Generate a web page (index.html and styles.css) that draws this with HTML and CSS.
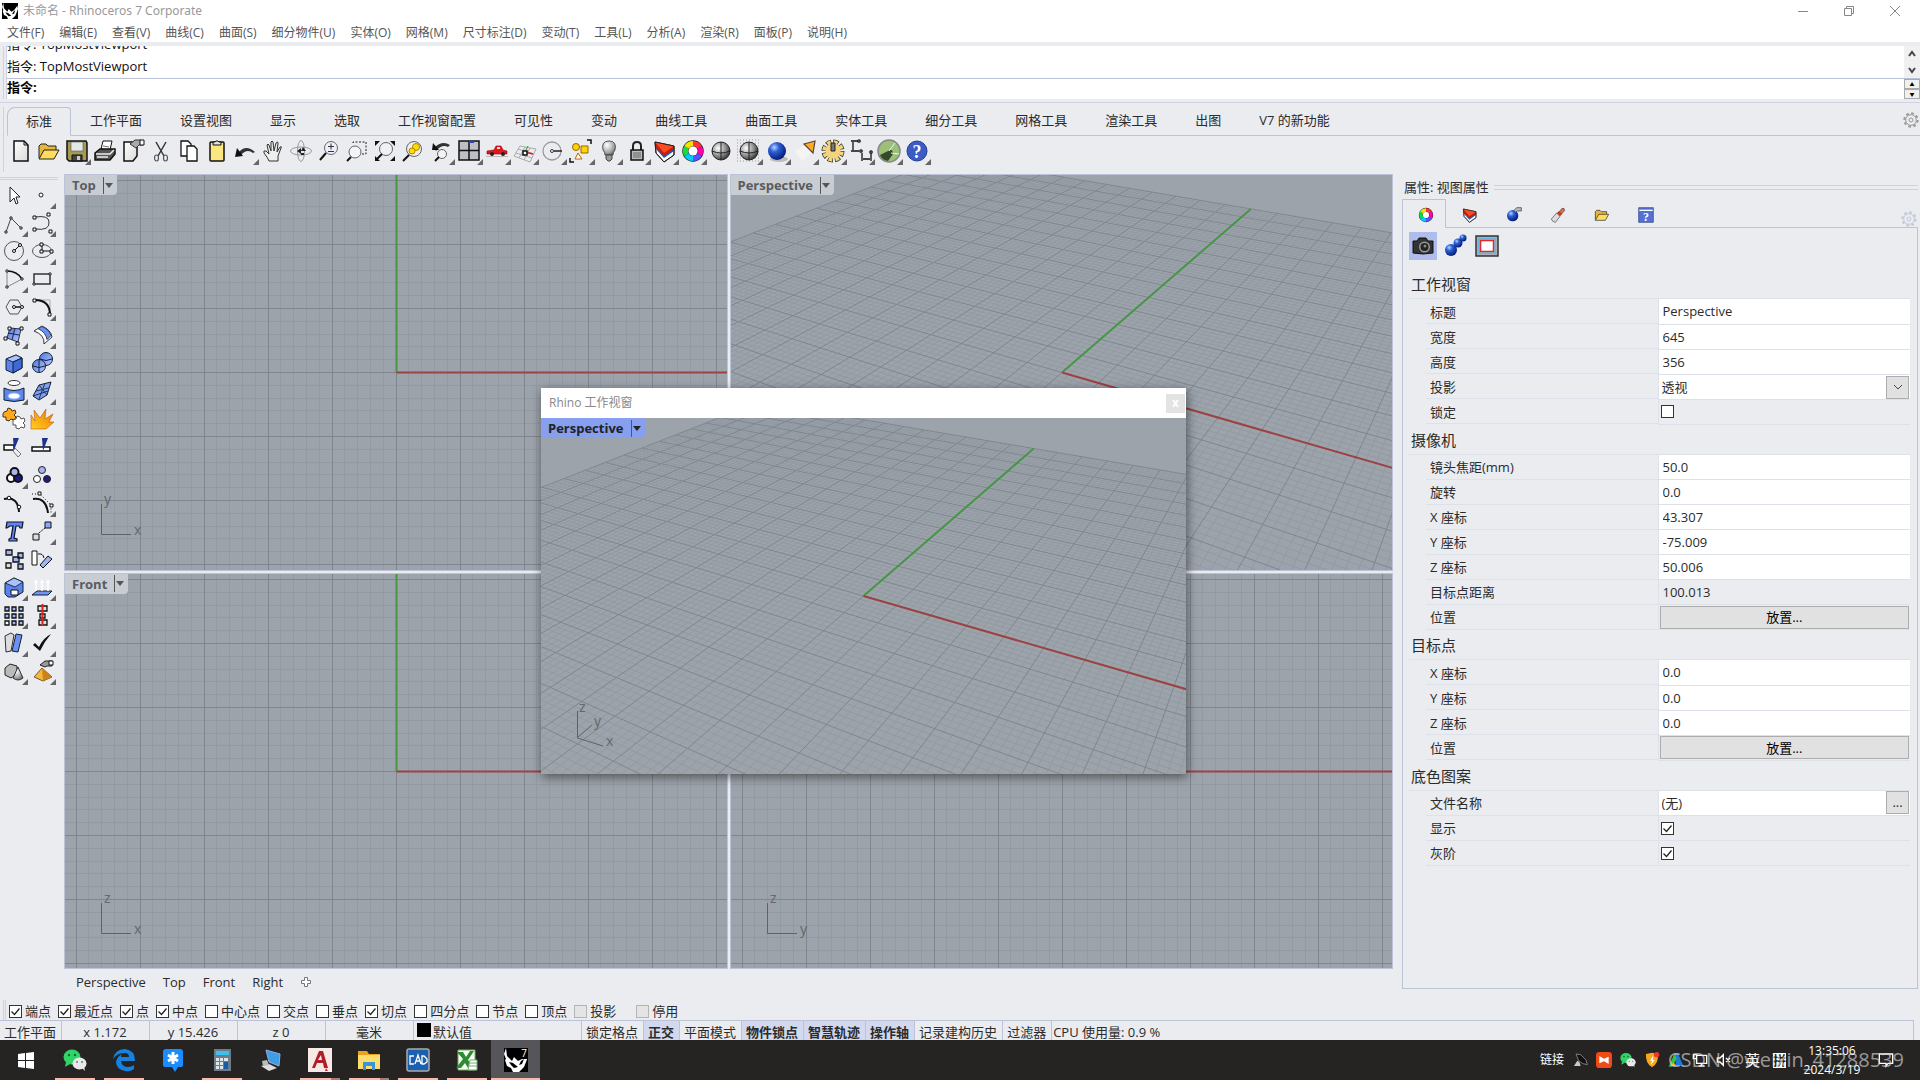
FILE: index.html
```html
<!DOCTYPE html>
<html lang="zh-CN">

<head>
    <meta charset="UTF-8">
    <meta name="viewport" content="width=device-width, initial-scale=1.0">
    <title>未命名 - Rhinoceros 7 Corporate</title>
    <link rel="stylesheet" href="styles.css">
</head>

<body>
    <!-- Shared icon shapes -->
    <svg class="defs" width="0" height="0" aria-hidden="true">
        <defs>
            <radialGradient id="gBlue" cx="35%" cy="30%" r="75%"><stop offset="0" stop-color="#b9d2ff"/><stop offset=".35" stop-color="#2a5fd8"/><stop offset="1" stop-color="#04156b"/></radialGradient>
            <radialGradient id="gGrey" cx="35%" cy="35%" r="75%"><stop offset="0" stop-color="#fff"/><stop offset=".5" stop-color="#999"/><stop offset="1" stop-color="#222"/></radialGradient>
            <radialGradient id="gBulb" cx="35%" cy="30%" r="75%"><stop offset="0" stop-color="#fff"/><stop offset=".7" stop-color="#a5a5a5"/><stop offset="1" stop-color="#666"/></radialGradient>
            <linearGradient id="gSurf" x1="0" y1="0" x2="1" y2="1"><stop offset="0" stop-color="#4a74e8"/><stop offset="1" stop-color="#b8ccff"/></linearGradient>
            <linearGradient id="gOrange" x1="0" y1="1" x2="1" y2="0"><stop offset="0" stop-color="#ffcf20"/><stop offset="1" stop-color="#f07800"/></linearGradient>
            <linearGradient id="gPage" x1="0" y1="0" x2="1" y2="1"><stop offset="0" stop-color="#fff"/><stop offset="1" stop-color="#d8d8d8"/></linearGradient>
        </defs>
        <symbol id="folder" viewBox="0 0 24 24"><path d="M2 19V7l2-2h5l2 2h8v4" fill="#e6b73a" stroke="#222"/><path d="M2 20 7 11h15l-5 9z" fill="#ffdc5e" stroke="#222"/></symbol>
        <symbol id="wheel" viewBox="0 0 24 24"><g fill="none" stroke-width="5"><circle cx="12" cy="12" r="7.500" stroke="#222" stroke-width="6.500"/><path d="M12 4.500A7.500 7.500 0 0 1 18.500 8.300" stroke="#f33"/><path d="M18.500 8.200A7.500 7.500 0 0 1 18.500 15.800" stroke="#f0a"/><path d="M18.500 15.700A7.500 7.500 0 0 1 12 19.500" stroke="#55f"/><path d="M12 19.500A7.500 7.500 0 0 1 5.500 15.700" stroke="#0cf"/><path d="M5.500 15.800A7.500 7.500 0 0 1 5.500 8.200" stroke="#1d4"/><path d="M5.500 8.300A7.500 7.500 0 0 1 12 4.500" stroke="#fd0"/></g><circle cx="12" cy="12" r="4.500" fill="#fff"/></symbol>
        <symbol id="layers" viewBox="0 0 24 24"><path d="M2 3l19 4v9l-10 7-8-9z" fill="#fff" stroke="#222"/><path d="M3 10l8 9 10-7V8l-10 7-8-9z" fill="#2450c0"/><path d="M2 3l1 6 8 8 10-7V7z" fill="#c3200c"/><path d="M2 3l19 4-10 7z" fill="#ff4a20"/><path d="M2 3l19 4v9l-10 7-8-9z" fill="none" stroke="#222"/></symbol>
        <symbol id="ball" viewBox="0 0 24 24"><circle cx="12" cy="12" r="9" fill="url(#gGrey)" stroke="#222"/><path d="M12 3v18M3 12q9 4 18 0" fill="none" stroke="#222"/></symbol>
        <symbol id="cog" viewBox="0 0 24 24"><circle cx="12" cy="12" r="10" fill="none" stroke-width="3" stroke-dasharray="4 3.850"/><circle cx="12" cy="12" r="8" fill="none" stroke-width="1.500"/><circle cx="12" cy="12" r="3" fill="none" stroke-width="1.500"/></symbol>
        <symbol id="rhino" viewBox="0 0 24 24"><path fill="#000" d="M0 0h24v24H0z"/><path fill="#fff" d="M2 0l1 8 5 5 2-4 4 4 4-2 5-7 1 5-4 10-5 5H9l-2-4-4-2-2-6 1-1-2-5z"/><path d="m5 14 4 1 5 4-4 1-3-3zM17 13l3-2-2 5-3 1z"/></symbol>
        <symbol id="wechat" viewBox="0 0 24 24"><ellipse cx="9" cy="9" rx="8.500" ry="7.500" fill="#2fd566"/><path d="m3 14-1 5 5-3z" fill="#2fd566"/><circle cx="6" cy="7" r="1.200" fill="#176b34"/><circle cx="12" cy="7" r="1.200" fill="#176b34"/><ellipse cx="16.500" cy="15.500" rx="7" ry="6" fill="#e9e9e9"/><path d="m19 20 3 3-1-5z" fill="#e9e9e9"/><circle cx="14" cy="14" r="1" fill="#777"/><circle cx="19" cy="14" r="1" fill="#777"/></symbol>
    </svg>

    <header class="titlebar">
        <svg class="app-icon"><use href="#rhino"/></svg>
        <span class="title">未命名 - Rhinoceros 7 Corporate</span>
        <div class="win-btns">
            <button aria-label="最小化"><svg viewBox="0 0 12 12"><path d="M1 6.500h10"/></svg></button>
            <button aria-label="还原"><svg viewBox="0 0 12 12"><path d="M1.500 3.500h7v7h-7zM3.500 3V1.500h7v7H9"/></svg></button>
            <button aria-label="关闭"><svg viewBox="0 0 12 12"><path d="m1 1 10 10M11 1 1 11"/></svg></button>
        </div>
    </header>

    <nav class="menubar">
        <a href="#">文件(F)</a><a href="#">编辑(E)</a><a href="#">查看(V)</a><a href="#">曲线(C)</a><a href="#">曲面(S)</a><a href="#">细分物件(U)</a><a href="#">实体(O)</a><a href="#">网格(M)</a><a href="#">尺寸标注(D)</a><a href="#">变动(T)</a><a href="#">工具(L)</a><a href="#">分析(A)</a><a href="#">渲染(R)</a><a href="#">面板(P)</a><a href="#">说明(H)</a>
    </nav>

    <section class="command">
        <div class="history">
            <div class="history-text">
                <p>指令: TopMostViewport</p>
                <p>指令: TopMostViewport</p>
            </div>
            <div class="scroll">
                <svg viewBox="0 0 10 10"><path d="m2 7 3-4 3 4"/></svg>
                <svg viewBox="0 0 10 10"><path d="m2 3 3 4 3-4"/></svg>
            </div>
        </div>
        <div class="prompt">
            <label for="cmd">指令:</label>
            <input id="cmd" type="text">
            <div class="spin"><button aria-label="上">▲</button><button aria-label="下">▼</button></div>
        </div>
    </section>

    <section class="tools">
        <div class="tabs">
            <button class="tab active">标准</button><button class="tab">工作平面</button><button class="tab">设置视图</button><button class="tab">显示</button><button class="tab">选取</button><button class="tab">工作视窗配置</button><button class="tab">可见性</button><button class="tab">变动</button><button class="tab">曲线工具</button><button class="tab">曲面工具</button><button class="tab">实体工具</button><button class="tab">细分工具</button><button class="tab">网格工具</button><button class="tab">渲染工具</button><button class="tab">出图</button><button class="tab">V7 的新功能</button>
            <svg class="cog"><use href="#cog"/></svg>
        </div>
        <div class="toolbar">
            <button class="tool" aria-label="新建"><svg viewBox="0 0 24 24"><path d="M5 2h10l4 4v16H5z" fill="url(#gPage)" stroke="#111" stroke-width="1.500"/><path d="M15 2v4h4" fill="none" stroke="#111"/></svg></button>
            <button class="tool" aria-label="打开"><svg><use href="#folder"/></svg></button>
            <button class="tool more" aria-label="保存"><svg viewBox="0 0 24 24"><path d="M2 2h19l1 2v18H4l-2-2z" fill="#a49a55" stroke="#111" stroke-width="1.500"/><path fill="#e4e9e4" stroke="#555" stroke-width=".6" d="M6 3h12v9H6z"/><path fill="#444" stroke="#111" d="M7 16h10v6H7z"/><path fill="#ccc" d="M12 17h3v4h-3z"/></svg></button>
            <button class="tool" aria-label="打印"><svg viewBox="0 0 24 24"><path d="m8 10 2-8h9l-2 9z" fill="#fff" stroke="#111"/><path d="m2 14 5-4h15v5l-5 6H2z" fill="#555" stroke="#111" stroke-width="1.500"/><path d="M3 15h14l4-4M4 18h11" fill="none" stroke="#eee" stroke-width="1.500"/><path d="m10 7 6 1" stroke="#777"/></svg></button>
            <button class="tool" aria-label="属性"><svg viewBox="0 0 24 24"><path d="M3 3h13v14l-4 5H3z" fill="url(#gPage)" stroke="#111" stroke-width="1.500"/><path d="m9 5 5-4h5l3 1v4h-4l-3 3z" fill="#aaa" stroke="#333"/><path d="M19 1h4v5h-4z" fill="#fff" stroke="#111"/></svg></button>
            <button class="tool" aria-label="剪切"><svg viewBox="0 0 24 24"><path d="m7 3 8 14M17 3 9 17" stroke="#333" stroke-width="1.500"/><g fill="none" stroke="#556" stroke-width="1.200"><ellipse cx="7.500" cy="19" rx="2" ry="3"/><ellipse cx="16.500" cy="19" rx="2" ry="3"/></g></svg></button>
            <button class="tool" aria-label="复制"><svg viewBox="0 0 24 24"><g fill="#fff" stroke="#111" stroke-width="1.300"><path d="M4 2h7l3 3v12H4z"/><path d="M10 7h7l3 3v12H10z"/></g></svg></button>
            <button class="tool" aria-label="粘贴"><svg viewBox="0 0 24 24"><rect x="5" y="3" width="14" height="19" rx="1" fill="#fbe680" stroke="#111" stroke-width="1.500"/><path d="M8 6V3h2l1-1h2l1 1h2v3z" fill="#ddd" stroke="#111"/></svg></button>
            <button class="tool more" aria-label="撤销"><svg viewBox="0 0 24 24"><path d="M6 13q7-8 16 0l-2 1q-6-5-12 2z" fill="#333"/><path d="m2 18 2-9 6 8z" fill="#111"/></svg></button>
            <button class="tool" aria-label="平移"><svg viewBox="0 0 24 24"><path d="M8 22q-1-3-5-8-1-3 2-2l3 3-2-9q1-2 2 0l2 6 0-9q1-2 2 0l1 9 2-8q2-2 2 0l-1 9 3-5q2-1 1 1l-3 8v5z" fill="#eee" stroke="#333"/></svg></button>
            <button class="tool" aria-label="旋转视图"><svg viewBox="0 0 24 24"><g fill="none" stroke="#999"><ellipse cx="12" cy="12" rx="10.500" ry="4"/><ellipse cx="12" cy="12" rx="3.500" ry="10.500"/></g><path d="m8 12 4-3v6zM14 8l3 4h-5zM12 14h3v2h-3z" fill="#222"/></svg></button>
            <button class="tool" aria-label="缩放"><svg viewBox="0 0 24 24"><circle cx="14" cy="9" r="6.500" fill="#eef" stroke="#666"/><path d="m9 14-6 7" stroke="#111" stroke-width="2"/><path d="M11 7.500h6m-3-3v6m-3 2h6" stroke="#333"/></svg></button>
            <button class="tool" aria-label="框选缩放"><svg viewBox="0 0 24 24"><path d="M8 4V3h13v12h-4" fill="none" stroke="#222" stroke-dasharray="2 1.500"/><circle cx="10" cy="13" r="6" fill="#f3f4f7" stroke="#666"/><path d="m6 18-4 4" stroke="#111" stroke-width="2"/></svg></button>
            <button class="tool" aria-label="缩放至最大范围"><svg viewBox="0 0 24 24"><path d="M2 2h5L2 7zM22 2h-5l5 5zM22 22h-5l5-5zM2 22v-5l5 5z" fill="#111"/><circle cx="13" cy="10" r="6.500" fill="#f0f1f5" stroke="#666"/><path d="m9 15-5 5" stroke="#111" stroke-width="2"/></svg></button>
            <button class="tool" aria-label="缩放至选取物件"><svg viewBox="0 0 24 24"><circle cx="13" cy="10" r="7.500" fill="#eee" stroke="#666"/><circle cx="15" cy="8" r="3.500" fill="#fd0" stroke="#a80"/><circle cx="11" cy="12" r="3" fill="#fd0" stroke="#a80"/><path d="m8 16-6 6" stroke="#111" stroke-width="2"/></svg></button>
            <button class="tool more" aria-label="复原视图"><svg viewBox="0 0 24 24"><path d="M5 9q8-8 16-3l-2 2q-6-3-12 4z" fill="#333"/><path d="m3 11 1-7 6 7z" fill="#111"/><circle cx="13" cy="15" r="4.500" fill="#f3f3f6" stroke="#666"/><path d="m10 18-4 4" stroke="#111" stroke-width="2"/></svg></button>
            <button class="tool more" aria-label="四个工作视窗"><svg viewBox="0 0 24 24"><path d="M2 2h20v19H2zM12 2v19M2 11.500h20" fill="#bcbfc6" stroke="#111" stroke-width="1.500"/><path d="M12 3h5" stroke="#24c" stroke-width="2"/></svg></button>
            <button class="tool more" aria-label="右视图"><svg viewBox="0 0 24 24"><path d="M2 15v-3l7-1 2-4h5l2 4 4 1v3H3z" fill="#e3161c" stroke="#900" stroke-width=".6"/><path d="M12 10V8h3v2z" fill="#fdd"/><circle cx="7" cy="15" r="2" fill="#222"/><circle cx="18" cy="15" r="2" fill="#222"/><path d="M1 17.500h22" stroke="#bbb"/></svg></button>
            <button class="tool more" aria-label="工作平面"><svg viewBox="0 0 24 24"><path d="M7 7 1 17l16 6 6-13zM5 10l16 5M3 14l16 5M12 8 6 19M17 9l-6 12" fill="none" stroke="#aaa"/><path d="m12 13 3-6" stroke="#1a1"/><path d="m12 13 8 2" stroke="#c22" stroke-width="1.500"/><path fill="#fff" stroke="#111" stroke-width="1.500" d="M10 12h4v4h-4z"/></svg></button>
            <button class="tool more" aria-label="物件锁点"><svg viewBox="0 0 24 24"><circle cx="11" cy="12" r="9" fill="none" stroke="#999" stroke-width="1.300"/><circle cx="11" cy="12" r="1.500" fill="#fff" stroke="#333"/><path d="M13 12h8" stroke="#222" stroke-width="1.500"/></svg></button>
            <button class="tool more" aria-label="选取"><svg viewBox="0 0 24 24"><circle cx="7" cy="8" r="3.500" fill="#ffd400" stroke="#960"/><path d="M12 7h7v7h-7z" fill="#ffd400" stroke="#960"/><path d="m9 14 4 6H6z" fill="#fff" stroke="#b60"/><path d="M18 1h4v4M1 19v4h4" fill="none" stroke="#111" stroke-width="1.500"/></svg></button>
            <button class="tool more" aria-label="隐藏"><svg viewBox="0 0 24 24"><path d="M8 16q0-3-2-5-2-9 6-9t6 9q-2 2-2 5z" fill="url(#gBulb)" stroke="#555"/><path d="M9 16h6v4l-2 2h-2l-2-2z" fill="#999" stroke="#444"/></svg></button>
            <button class="tool more" aria-label="锁定"><svg viewBox="0 0 24 24"><path d="M8 11V7q0-4 4-4t4 4v4" fill="none" stroke="#222" stroke-width="2"/><path d="M6 11h12v10H6z" fill="#bbb" stroke="#111" stroke-width="1.500"/><path d="M8 14h8m-8 2h8m-8 2h8" stroke="#666"/></svg></button>
            <button class="tool more" aria-label="图层"><svg><use href="#layers"/></svg></button>
            <button class="tool more" aria-label="物件属性"><svg><use href="#wheel"/></svg></button>
            <button class="tool" aria-label="着色"><svg><use href="#ball"/></svg></button>
            <button class="tool more" aria-label="着色模式"><svg viewBox="0 0 24 24"><path d="M0 1h24M0 4h24M0 7h24M0 10h24M0 13h24M0 16h24M0 19h24M0 22h24" stroke="#999" stroke-dasharray="1 2"/><use href="#ball"/></svg></button>
            <button class="tool more" aria-label="渲染"><svg viewBox="0 0 24 24"><ellipse cx="14" cy="20" rx="9" ry="3" fill="#bbb"/><circle cx="12" cy="12" r="9" fill="url(#gBlue)"/></svg></button>
            <button class="tool more" aria-label="灯光"><svg viewBox="0 0 24 24"><path d="m2 12 10-6 7 8-10 8z" fill="#f4f4f4"/><path d="m11 5 11-3-2 12z" fill="#ffa928" stroke="#543" stroke-width="1.200"/></svg></button>
            <button class="tool more" aria-label="选项"><svg viewBox="0 0 24 24"><g fill="none"><circle cx="12" cy="12" r="9" stroke="#332" stroke-width="5" stroke-dasharray="5.070 2"/><circle cx="12" cy="12" r="8.500" stroke="#f5d37a" stroke-width="4.500" stroke-dasharray="3.500 3.175" stroke-dashoffset="-.7"/></g><circle cx="12" cy="12" r="7.500" fill="#f5d37a"/><path d="M10 4h4v8h-4z" fill="#777" stroke="#222"/></svg></button>
            <button class="tool more" aria-label="尺寸标注"><svg viewBox="0 0 24 24"><g fill="none" stroke="#111" stroke-width="1.300"><path d="M2 2h7M2 12h8M4 3v8M13 14v8M22 14v8M14 20h7"/><circle cx="10" cy="2" r="1.200" fill="#fff"/><circle cx="12" cy="12" r="1.200" fill="#fff"/><circle cx="22" cy="13" r="1.200" fill="#fff"/></g></svg></button>
            <button class="tool more" aria-label="Grasshopper"><svg viewBox="0 0 24 24"><circle cx="12" cy="12" r="11" fill="#9cc07a" stroke="#888" stroke-width="1.500"/><path d="m3 16 8-4q5-3 5 3l-5 7q-6-1-8-6z" fill="#344a2a"/><path d="m12 12 6-8m-4 10 8 1" stroke="#dfe" /></svg></button>
            <button class="tool more" aria-label="说明"><svg viewBox="0 0 24 24"><circle cx="12" cy="12" r="10" fill="#3a5cc4" stroke="#24408c"/><text x="12" y="19" text-anchor="middle" class="q">?</text></svg></button>
        </div>
    </section>

    <main class="workspace">
        <aside class="sidebar">
            <button class="tool" aria-label="选择"><svg viewBox="0 0 24 24"><path d="M8 4v15l4-4 2 6 2-1-2-6h4z" fill="#fff" stroke="#222"/></svg></button>
            <button class="tool more" aria-label="点"><svg viewBox="0 0 24 24"><circle cx="11" cy="12" r="2" fill="#fff" stroke="#222"/></svg></button>
            <button class="tool more" aria-label="多重直线"><svg viewBox="0 0 24 24"><path d="M4 21 9 7l10 10" fill="none" stroke="#444"/><g fill="#fff" stroke="#111"><circle cx="4" cy="21" r="1.200"/><circle cx="9" cy="7" r="1.200"/><circle cx="19" cy="17" r="1.200"/></g></svg></button>
            <button class="tool more" aria-label="曲线"><svg viewBox="0 0 24 24"><path d="M5 6q14-2 14 5 1 9-14 7" fill="none" stroke="#333"/><g class="pt"><path d="M3 5h3v3H3zM17 2h3v3h-3zM3 17h3v3H3zM19 19h3v3h-3z"/></g></svg></button>
            <button class="tool more" aria-label="圆"><svg viewBox="0 0 24 24"><circle cx="12" cy="12" r="9.500" fill="none" stroke="#555"/><path d="m12 12 6-6" stroke="#111"/><circle cx="12" cy="12" r="1.500" fill="#fff" stroke="#111"/><circle cx="18" cy="6" r="1.500" fill="#fff" stroke="#111"/></svg></button>
            <button class="tool more" aria-label="椭圆"><svg viewBox="0 0 24 24"><ellipse cx="12" cy="12" rx="9.500" ry="6.500" fill="none" stroke="#555"/><path d="M12 6v6h9" fill="none" stroke="#111"/><g class="pt"><path d="M10 4h3v3h-3zM10 11h3v3h-3zM20 11h3v3h-3z"/></g></svg></button>
            <button class="tool more" aria-label="圆弧"><svg viewBox="0 0 24 24"><path d="M5 20V4m0 16 15-8" fill="none" stroke="#888"/><path d="M5 4q10 0 15 8" fill="none" stroke="#111" stroke-width="1.500"/><g fill="#fff" stroke="#111"><circle cx="5" cy="20" r="1.200"/><circle cx="5" cy="4" r="1.200"/><circle cx="20" cy="12" r="1.200"/></g></svg></button>
            <button class="tool more" aria-label="矩形"><svg viewBox="0 0 24 24"><path d="M4 7h16v10H4z" fill="none" stroke="#333" stroke-width="1.500"/><circle cx="20" cy="7" r="1.200" fill="#fff" stroke="#111"/><circle cx="4" cy="17" r="1.200" fill="#fff" stroke="#111"/></svg></button>
            <button class="tool more" aria-label="多边形"><svg viewBox="0 0 24 24"><path d="M8 5h8l4 7-4 7H8l-4-7z" fill="none" stroke="#555"/><path d="M12 12h7" stroke="#111" stroke-width="1.500"/><circle cx="12" cy="12" r="1.500" fill="#fff" stroke="#111"/><circle cx="20" cy="12" r="1.500" fill="#fff" stroke="#111"/></svg></button>
            <button class="tool more" aria-label="圆角"><svg viewBox="0 0 24 24"><path d="M5 5h15v15" fill="none" stroke="#aaa"/><path d="M5 5q15 0 15 15" fill="none" stroke="#111" stroke-width="2"/><g class="pt"><path d="M3 4h3v3H3zM18 18h3v3h-3z"/></g></svg></button>
            <button class="tool more" aria-label="曲面"><svg viewBox="0 0 24 24"><path d="m8 5 11 1-3 13-11-4z" fill="url(#gSurf)" stroke="#334"/><path d="m13 5-3 12M6 10l11 2" stroke="#224"/><g class="pt"><path d="M6 4h3v3H6zM18 4h3v3h-3zM2 14h3v3H2zM14 19h3v3h-3z"/></g></svg></button>
            <button class="tool more" aria-label="放样"><svg viewBox="0 0 24 24"><path d="M4 8l8-5q9 4 10 11l-8 7q1-9-10-13z" fill="#fff" stroke="#333"/><path d="M8 5.500q8 4 9 11l4-4q-2-6-9-9z" fill="#6d91f2" stroke="#345"/></svg></button>
            <button class="tool more" aria-label="立方体"><svg viewBox="0 0 24 24"><path d="m4 8 10-4 6 3v10l-9 5-7-3z" fill="#5b82ee" stroke="#123"/><path d="m4 8 10-4 6 3-9 4z" fill="#a9c1ff" stroke="#234"/><path d="m11 11v11l9-5V7z" fill="#3f68d8" stroke="#123"/></svg></button>
            <button class="tool more" aria-label="布尔运算"><svg viewBox="0 0 24 24"><circle cx="16" cy="8" r="6.500" fill="url(#gSurf)" stroke="#123"/><circle cx="9" cy="15" r="6.500" fill="url(#gSurf)" stroke="#123"/><path d="M3 15q6 3 12 0M9 9v12M10 8q6 3 12 0" fill="none" stroke="#123"/></svg></button>
            <button class="tool more" aria-label="投影"><svg viewBox="0 0 24 24"><ellipse cx="12" cy="4" rx="6" ry="2.500" fill="#fff" stroke="#333"/><path d="M2 9q10 5 20 0v12q-10 3-20 0z" fill="#5f86ee" stroke="#123"/><ellipse cx="12" cy="17" rx="6" ry="3" fill="#fff" stroke="#9bf"/></svg></button>
            <button class="tool more" aria-label="网格"><svg viewBox="0 0 24 24"><path d="m3 17 6-11 12-3-4 13-8 5z" fill="#7f9ff2" stroke="#123"/><path d="m6 12 13-3M9 20l6-16M3 17l15-5M9 6l8 10" fill="none" stroke="#235"/></svg></button>
            <button class="tool" aria-label="组合"><svg viewBox="0 0 24 24"><path d="M2 5l3-1 1-3 3 1 1 2 3-1 1 3-2 2 2 2-2 3-3-1-2 2-3-1 0-3-3 0 0-3z" fill="#ffa91c" stroke="#432"/><path d="M11 13l3-1 1-3 3 1 1 2 3-1 1 3-2 2 2 2-1 3-3-1-2 2-3-1 0-3-3 0z" fill="#fff" stroke="#555"/></svg></button>
            <button class="tool" aria-label="炸开"><svg viewBox="0 0 24 24"><path d="M1 22V8l4 6L4 3l6 8 6-9-1 10 8-5-4 8 5 0-8 7z" fill="url(#gOrange)" stroke="#a40" stroke-width=".5"/></svg></button>
            <button class="tool" aria-label="修剪"><svg viewBox="0 0 24 24"><path d="M2 10h10v5H2z" fill="#fff" stroke="#111" stroke-width="1.500"/><path d="m13 13 6 6-3 3-5-6z" fill="#eee" stroke="#777"/><path d="M11 3h6l-5 12z" fill="#1c348c"/></svg></button>
            <button class="tool" aria-label="分割"><svg viewBox="0 0 24 24"><path d="M2 12h18v4H2z" fill="#fff" stroke="#111" stroke-width="1.500"/><path d="M12 3h6l-5 13z" fill="#1c348c"/></svg></button>
            <button class="tool more" aria-label="群组"><svg viewBox="0 0 24 24"><g stroke="#111" stroke-width="2"><circle cx="9" cy="15" r="4" fill="#fff"/><circle cx="16" cy="15" r="4" fill="#1c1c80"/><circle cx="12.500" cy="9" r="4" fill="#aab4ee"/></g></svg></button>
            <button class="tool" aria-label="解散群组"><svg viewBox="0 0 24 24"><g stroke="#222"><circle cx="12" cy="7" r="3.500" fill="#aab4ee"/><circle cx="7" cy="16" r="3.500" fill="#fff"/><circle cx="17" cy="16" r="3.500" fill="#1c1c80"/></g></svg></button>
            <button class="tool" aria-label="编辑点"><svg viewBox="0 0 24 24"><path d="M2 8q14-3 15 13" fill="none" stroke="#111" stroke-width="2"/><circle cx="7" cy="7" r="1.800" fill="#fff" stroke="#111"/><circle cx="17" cy="16" r="1.800" fill="#fff" stroke="#111"/></svg></button>
            <button class="tool more" aria-label="控制点"><svg viewBox="0 0 24 24"><path d="M3 8q13-2 15 14" fill="none" stroke="#111" stroke-width="2"/><path d="M2 3h8l11 11v8" fill="none" stroke="#111" stroke-dasharray="1 2"/><g class="pt"><path d="M8 1h3v3H8zM20 13h3v3h-3z"/></g></svg></button>
            <button class="tool" aria-label="文字"><svg viewBox="0 0 24 24"><path d="M5 3h16l-1 6h-2l-1-2h-3l-2 12 3 1v2H7v-2l2-1 2-12H8L5 9H4z" fill="#5f86f2" stroke="#112" stroke-width="1.200"/></svg></button>
            <button class="tool more" aria-label="移动"><svg viewBox="0 0 24 24"><path fill="#ddd" stroke="#111" d="M3 15h6v6H3z"/><path fill="#8da9f6" stroke="#111" d="M15 3h6v6h-6z"/><path d="m9 14 6-5" stroke="#111" stroke-dasharray="2 1"/></svg></button>
            <button class="tool" aria-label="复制物件"><svg viewBox="0 0 24 24"><g fill="#9db6fa" stroke="#111" stroke-width="1.300"><path d="M4 3h6v5H4zM16 6h5v5h-5zM11 10h6v5h-6zM16 17h5v5h-5z"/><path fill="#ddd" d="M4 16h5v5H4z"/></g></svg></button>
            <button class="tool" aria-label="旋转"><svg viewBox="0 0 24 24"><path fill="#fff" stroke="#111" d="M2 4h5v14H2z"/><path d="M8 7q5-1 6 4" fill="none" stroke="#111"/><path d="m10 18 8-9 4 3-9 9z" fill="#9db6fa" stroke="#111"/></svg></button>
            <button class="tool more" aria-label="实体编辑"><svg viewBox="0 0 24 24"><path d="m3 8 9-5 9 4v10l-8 5H6l-3-3z" fill="#5b82ee" stroke="#123"/><path d="m3 8 9-5 9 4-8 5z" fill="#a9c1ff" stroke="#234"/><path d="M9 15h7v5H9z" fill="#fff" stroke="#111"/></svg></button>
            <button class="tool more" aria-label="挤出"><svg viewBox="0 0 24 24"><path d="m2 20 5-4h15l-4 4z" fill="#7295f5" stroke="#123"/><path d="M6 16V6m6 10V6m6 10V6" stroke="#fff" stroke-width="1.500"/><path d="m4 8 2-4 2 4zm6 0 2-4 2 4zm6 0 2-4 2 4z" fill="#fff"/></svg></button>
            <button class="tool more" aria-label="阵列"><svg viewBox="0 0 24 24"><g fill="#9db6fa" stroke="#111" stroke-width="1.300"><path d="M3 4h4v4H3zM10 4h4v4h-4zM17 4h4v4h-4zM3 11h4v4H3zM10 11h4v4h-4zM17 11h4v4h-4zM10 18h4v4h-4zM17 18h4v4h-4z"/><path fill="#fff" d="M3 18h4v4H3z"/></g></svg></button>
            <button class="tool more" aria-label="对齐"><svg viewBox="0 0 24 24"><g fill="#ddd" stroke="#111" stroke-width="1.300"><path d="M8 3h9v5H8zM10 11h5v4h-5zM9 17h8v5H9z"/></g><path d="M12.500 1v22" stroke="#d22" stroke-width="2"/></svg></button>
            <button class="tool more" aria-label="弯曲"><svg viewBox="0 0 24 24"><path d="m3 5 6-3 3 2-3 16-5 1z" fill="#ddd" stroke="#333"/><path d="m14 3 6 1-4 17-6-1z" fill="#6d91f2" stroke="#123"/></svg></button>
            <button class="tool more" aria-label="检查"><svg viewBox="0 0 24 24"><path d="m3 14 2-2 4 4q4-9 12-13-7 8-11 17z" fill="#111"/></svg></button>
            <button class="tool more" aria-label="图块"><svg viewBox="0 0 24 24"><path d="m3 9 5-4 7 2v8l-6 4-6-3z" fill="#bbb" stroke="#222"/><path d="m16 8 5 11q-5 4-10 0z" fill="url(#gBulb)" stroke="#333"/></svg></button>
            <button class="tool more" aria-label="历史记录"><svg viewBox="0 0 24 24"><path d="m12 9 10 9-9 4-9-4z" fill="#f5b83c" stroke="#753"/><path d="m12 9 1 13 9-4z" fill="#c98418"/><path d="m10 6 5-4h7v5h-5l-2 1z" fill="#999" stroke="#222"/><path d="M19 2h4v4h-4z" fill="#fff" stroke="#111"/></svg></button>
        </aside>

        <div class="stage">
            <div class="views">
                <div class="view" data-view="ortho" data-axes="x y">
                    <button class="view-tag">Top<i></i></button>
                </div>
                <div class="view" data-view="persp">
                    <button class="view-tag">Perspective<i></i></button>
                </div>
                <div class="view" data-view="ortho" data-axes="x z">
                    <button class="view-tag">Front<i></i></button>
                </div>
                <div class="view" data-view="ortho" data-axes="y z">
                </div>
                <section class="float">
                    <header>
                        <span>Rhino 工作视窗</span>
                        <button aria-label="关闭">x</button>
                    </header>
                    <div class="view" data-view="persp">
                        <button class="view-tag current">Perspective<i></i></button>
                    </div>
                </section>
            </div>
            <nav class="view-tabs">
                <a href="#">Perspective</a><a href="#">Top</a><a href="#">Front</a><a href="#">Right</a>
                <button aria-label="新建视图"><svg viewBox="0 0 12 12"><path d="M4.500 1.500h3v3h3v3h-3v3h-3v-3h-3v-3h3z" fill="#fff" stroke="#777"/></svg></button>
            </nav>
        </div>

        <aside class="panel">
            <h1>属性: 视图属性</h1>
            <div class="panel-tabs">
                <button class="active" aria-label="属性"><svg><use href="#wheel"/></svg></button>
                <button aria-label="图层"><svg><use href="#layers"/></svg></button>
                <button aria-label="材质"><svg viewBox="0 0 24 24"><circle cx="10" cy="13" r="8.500" fill="url(#gBlue)"/><path d="m12 5 4-4h7v5h-6l-3 2z" fill="#bbb" stroke="#333"/></svg></button>
                <button aria-label="材质库"><svg viewBox="0 0 24 24"><path d="m14 7 4-5q4-1 4 3l-5 6z" fill="#e66a3a" stroke="#444"/><path d="m10 9 5 5-7 9q-5-1-6-5z" fill="#ddd" stroke="#444"/><path d="m10 9 4-3 4 5-3 3z" fill="#c33a1c"/></svg></button>
                <button aria-label="文件库"><svg><use href="#folder"/></svg></button>
                <button aria-label="说明"><svg viewBox="0 0 24 24"><path fill="#5470d4" stroke="#333f7c" d="M1 1h22v22H1z"/><path fill="#fff" d="M2 4h20v2H2z"/><text x="12" y="21" text-anchor="middle" class="q">?</text></svg></button>
                <svg class="cog"><use href="#cog"/></svg>
            </div>
            <div class="panel-body">
                <div class="pages">
                    <button class="active" aria-label="视图"><svg viewBox="0 0 24 24"><path d="M2 7h4l2-3h7l2 3h5v12q-10 2-20 0z" fill="#333" stroke="#111"/><circle cx="13.500" cy="13" r="5.500" fill="#999"/><circle cx="13.500" cy="13" r="4" fill="#222"/><circle cx="14" cy="12" r="1.500" fill="#6a9a7a"/></svg></button>
                    <button aria-label="材质"><svg viewBox="0 0 24 24"><circle cx="8" cy="16" r="6" fill="url(#gBlue)"/><circle cx="15" cy="9" r="4.500" fill="url(#gBlue)"/><circle cx="20" cy="4" r="3.500" fill="url(#gBlue)"/></svg></button>
                    <button aria-label="显示"><svg viewBox="0 0 24 24"><path d="M1 2h22v20H1z" fill="#aab0b4" stroke="#333" stroke-width="1.500"/><path d="M4 5h16v14H4z" fill="#fff" stroke="#4fb8ee" stroke-width="1.500"/><path d="M5.500 6.500h13v11h-13z" fill="none" stroke="#e22" stroke-width="1.500"/></svg></button>
                </div>
                <table>
                    <caption>工作视窗</caption>
                    <tr><th><label for="p1">标题</label></th><td class="field"><input id="p1" type="text" value="Perspective"></td></tr>
                    <tr><th><label for="p2">宽度</label></th><td class="field"><input id="p2" type="text" value="645"></td></tr>
                    <tr><th><label for="p3">高度</label></th><td class="field"><input id="p3" type="text" value="356"></td></tr>
                    <tr><th><label for="p4">投影</label></th><td class="field"><div class="combo"><select id="p4"><option>透视</option></select><span><svg viewBox="0 0 12 12"><path d="m2 4 4 4 4-4"/></svg></span></div></td></tr>
                    <tr><th><label for="p5">锁定</label></th><td><input id="p5" type="checkbox"></td></tr>
                </table>
                <table>
                    <caption>摄像机</caption>
                    <tr><th><label for="c1">镜头焦距(mm)</label></th><td class="field"><input id="c1" type="text" value="50.0"></td></tr>
                    <tr><th><label for="c2">旋转</label></th><td class="field"><input id="c2" type="text" value="0.0"></td></tr>
                    <tr><th><label for="c3">X 座标</label></th><td class="field"><input id="c3" type="text" value="43.307"></td></tr>
                    <tr><th><label for="c4">Y 座标</label></th><td class="field"><input id="c4" type="text" value="-75.009"></td></tr>
                    <tr><th><label for="c5">Z 座标</label></th><td class="field"><input id="c5" type="text" value="50.006"></td></tr>
                    <tr><th><label for="c6">目标点距离</label></th><td><input id="c6" type="text" value="100.013" readonly></td></tr>
                    <tr><th>位置</th><td><button class="place">放置...</button></td></tr>
                </table>
                <table>
                    <caption>目标点</caption>
                    <tr><th><label for="t1">X 座标</label></th><td class="field"><input id="t1" type="text" value="0.0"></td></tr>
                    <tr><th><label for="t2">Y 座标</label></th><td class="field"><input id="t2" type="text" value="0.0"></td></tr>
                    <tr><th><label for="t3">Z 座标</label></th><td class="field"><input id="t3" type="text" value="0.0"></td></tr>
                    <tr><th>位置</th><td><button class="place">放置...</button></td></tr>
                </table>
                <table>
                    <caption>底色图案</caption>
                    <tr><th><label for="b1">文件名称</label></th><td class="field"><div class="file"><input id="b1" type="text" value="(无)"><button>...</button></div></td></tr>
                    <tr><th><label for="b2">显示</label></th><td><input id="b2" type="checkbox" checked></td></tr>
                    <tr><th><label for="b3">灰阶</label></th><td><input id="b3" type="checkbox" checked></td></tr>
                </table>
            </div>
        </aside>
    </main>

    <section class="osnap">
        <label><input type="checkbox" checked>端点</label>
        <label><input type="checkbox" checked>最近点</label>
        <label><input type="checkbox" checked>点</label>
        <label><input type="checkbox" checked>中点</label>
        <label><input type="checkbox">中心点</label>
        <label><input type="checkbox">交点</label>
        <label><input type="checkbox">垂点</label>
        <label><input type="checkbox" checked>切点</label>
        <label><input type="checkbox">四分点</label>
        <label><input type="checkbox">节点</label>
        <label><input type="checkbox">顶点</label>
        <label><input type="checkbox" disabled>投影</label>
        <label class="last"><input type="checkbox" disabled>停用</label>
    </section>

    <footer class="status">
        <button class="cplane">工作平面</button>
        <span class="coord">x 1.172</span>
        <span class="coord">y 15.426</span>
        <span class="coord">z 0</span>
        <span class="coord">毫米</span>
        <button class="layer"><i></i>默认值</button>
        <button>锁定格点</button>
        <button class="on">正交</button>
        <button>平面模式</button>
        <button class="on">物件锁点</button>
        <button class="on">智慧轨迹</button>
        <button class="on">操作轴</button>
        <button>记录建构历史</button>
        <button>过滤器</button>
        <span class="cpu">CPU 使用量: 0.9 %</span>
    </footer>

    <footer class="taskbar">
        <button aria-label="开始"><svg viewBox="0 0 24 24"><path fill="#fff" d="m4 6 7-1v7H4zM12 5l8-1v8h-8zM4 13h7v7l-7-1zM12 13h8v8l-8-1z"/></svg></button>
        <button class="run" aria-label="微信"><svg><use href="#wechat"/></svg></button>
        <button class="run" aria-label="Edge"><svg viewBox="0 0 24 24"><path d="M1 11Q3 1 13 1q10 1 10 12H9q1 6 7 6 4 0 6-2v4q-4 3-9 2-9-2-9-9 1-6 8-9-7 0-11 6zm8-2h8q0-4-4-4t-4 4z" fill="#1382e0"/></svg></button>
        <button aria-label="助手"><svg viewBox="0 0 24 24"><path d="M5 1h14q3 0 3 3v13q0 2-3 2h-2l-3 5-3-5H5q-3 0-3-2V4q0-3 3-3z" fill="#1a8cff"/><path d="M12 4v12M7 7l10 6m0-6L7 13" stroke="#fff" stroke-width="3"/></svg></button>
        <button class="run" aria-label="计算器"><svg viewBox="0 0 24 24"><path fill="#6d7c88" d="M4 1h17v22H4z"/><path fill="#3cc1ee" d="M6 3h13v4H6z"/><path d="M6 10h3v3H6zm4 0h3v3h-3zm4 0h4v3h-4zM6 14h3v3H6zm4 0h3v3h-3zM6 18h3v3H6zm4 0h3v3h-3z" fill="#dfe6ea"/><path fill="#1a5aa0" d="M14 14h4v7h-4z"/></svg></button>
        <button aria-label="远程"><svg viewBox="0 0 24 24"><path d="m7 2 14 4-1 12-10-4z" fill="#3c9ee6" stroke="#9ad"/><path d="m2 18 8-2 8 4-8 3z" fill="#ddd"/><path d="m3 13 5-1 2 5-6 1z" fill="#bbb"/></svg></button>
        <button class="run multi" aria-label="AutoCAD"><svg viewBox="0 0 24 24"><path fill="#f6e9e6" d="M0 0h24v24H0z"/><path d="m4 20 7-17h4l5 17h-4l-1-5H9l-2 5zm6-8h4l-1-5z" fill="#b01e28"/><path d="m18 20 2 3h-3z" fill="#d22"/></svg></button>
        <button class="run multi" aria-label="资源管理器"><svg viewBox="0 0 24 24"><path fill="#e6a51c" d="M1 3h9l2 3h11v15H1z"/><path fill="#ffdc6e" d="M1 7h22v14H1z"/><path d="M6 22v-8h12v8h-3v-4H9v4z" fill="#3a94d8"/></svg></button>
        <button class="run" aria-label="CAD"><svg viewBox="0 0 24 24"><rect x="1" y="1" width="22" height="22" rx="2" fill="#1b5fae" stroke="#aaa" stroke-width="1.500"/><g fill="none" stroke="#fff" stroke-width="1.300"><path d="M8 8H4v8h4M9 16l3-9 3 9m-5-3h4M16 8h2l3 3v3l-3 2h-2z"/></g></svg></button>
        <button class="run" aria-label="Excel"><svg viewBox="0 0 24 24"><path fill="#f5faf3" stroke="#6fae5a" d="M3 2h17v20H3z"/><path d="m2 4 6 0 3 5 4-6h4l-6 9 6 8h-6l-3-5-4 5H1l7-9z" fill="#2e8b34"/><path fill="#fff" stroke="#7a7" d="M15 12h7v10h-9z"/><path d="M15 15h7m-8 3h8" stroke="#7a7"/></svg></button>
        <button class="run focus" aria-label="Rhino"><svg viewBox="0 0 24 24"><use href="#rhino"/><path d="M15 0h9v11h-9z"/><text x="20" y="9" text-anchor="middle" class="seven">7</text></svg></button>
        <div class="tray">
            <span>链接</span>
            <svg viewBox="0 0 24 24"><path d="m6 3 7 1 8 8 2 7q-7 0-13-6z" fill="#111" stroke="#aaa"/><path d="m8 13-5 8h10l-2-6z" fill="#ccc"/></svg>
            <svg viewBox="0 0 24 24"><rect width="24" height="24" rx="5" fill="#f04a16"/><path d="m5 6 7 4 7-3v11l-7-4-7 3z" fill="#fff"/></svg>
            <svg><use href="#wechat"/></svg>
            <svg viewBox="0 0 24 24"><path d="m3 3 9-2 9 2q1 14-9 20Q2 17 3 3z" fill="#f8a818"/><path d="m14 5-5 8h3l-2 7 6-8h-3z" fill="#fff"/><circle cx="19" cy="4" r="4" fill="#e33"/></svg>
            <svg viewBox="0 0 24 24"><path d="M10 2h5l8 19H12z" fill="#1a7be0"/><path d="m10 2 3 8-7 12H1z" fill="#3bc23b"/><path d="m8 15 5 6H5z" fill="#fa1"/></svg>
            <svg viewBox="0 0 24 24" class="line"><path d="M7 5h15v12H7zM10 21h9M14 17v4M2 4h5v6H2z"/></svg>
            <svg viewBox="0 0 24 24" class="line"><path d="M2 9h4l5-5v16l-5-5H2zM15 9l6 6m0-6-6 6"/></svg>
            <span class="ime">英</span>
            <span class="pin">拼</span>
            <time>13:35:06<br>2024/3/19</time>
            <svg viewBox="0 0 24 24" class="line"><path d="M2 3h20v14h-7l-3 4v-4H2z"/></svg>
        </div>
        <span class="mark">CSDN @weixin_41288539</span>
    </footer>

    <script src="views.js"></script>
</body>

</html>
```
FILE: styles.css
```css
* {
    margin: 0;
    padding: 0;
    box-sizing: border-box;
}

body {
    height: 100vh;
    display: flex;
    flex-direction: column;
    overflow: hidden;
    background-color: #eaecf0;
    color: #2b2b2b;
    font: 13px/20px "Open Sans", "Noto Sans CJK SC", sans-serif;
}

button,
input,
select {
    font: inherit;
    color: inherit;
    border: 0;
    background: none;
}

a {
    color: inherit;
    text-decoration: none;
}

svg {
    display: block;
}

.defs {
    position: absolute;
}

/* title and menu */
.titlebar {
    display: flex;
    align-items: center;
    height: 22px;
    padding-left: 2px;
    background-color: #fff;
    color: #999;
    font-family: "Noto Sans", "Noto Sans CJK SC", sans-serif;
    font-size: 12px;
}

.app-icon {
    width: 16px;
    height: 16px;
    margin-right: 5px;
}

.win-btns {
    display: flex;
    margin-left: auto;
    padding-right: 2px;
}

.win-btns button {
    width: 46px;
    height: 20px;
    display: grid;
    place-items: center;
}

.win-btns svg {
    width: 12px;
    height: 12px;
    fill: none;
    stroke: #888;
}

.menubar {
    display: flex;
    gap: 15px;
    height: 20px;
    padding-left: 7px;
    background-color: #fff;
    color: #555;
    font-size: 12px;
    line-height: 22px;
    white-space: nowrap;
}

/* command line */
.command {
    margin: 4px 0 3px 3px;
    padding-left: 2px;
    border-left: 1px solid #cdd1e0;
}

.history {
    display: flex;
    height: 33px;
    overflow: hidden;
    background-color: #fff;
    border-left: 1px solid #cdd1e0;
    border-bottom: 1px solid #bcc2d8;
    color: #111;
}

.history-text {
    flex: 1;
    display: flex;
    flex-direction: column;
    justify-content: flex-end;
    padding-bottom: 1px;
    line-height: 22px;
}

.scroll {
    width: 16px;
    display: flex;
    flex-direction: column;
    justify-content: space-around;
    align-items: center;
    background-color: #f0f0f0;
}

.scroll svg {
    width: 10px;
    height: 10px;
    fill: none;
    stroke: #444;
    stroke-width: 2;
}

.prompt {
    display: flex;
    height: 20px;
    background-color: #fff;
    border-left: 1px solid #cdd1e0;
    color: #000;
    font-weight: bold;
    line-height: 16px;
}

.prompt input {
    flex: 1;
    outline: none;
}

.spin {
    display: flex;
    flex-direction: column;
    width: 16px;
    background-color: #f0f0f0;
}

.spin button {
    flex: 1;
    border: 1px solid #aaa;
    font-size: 5px;
    line-height: 6px;
}

/* toolbar tabs */
.tools {
    border-top: 1px solid #cfd3e2;
    padding: 4px 0 0 3px;
}

.tabs {
    display: flex;
    height: 29px;
    padding-left: 3px;
    border-left: 1px solid #cdd1e0;
    position: relative;
}

.tab {
    padding: 0 19px 2px;
    border-bottom: 1px solid #bcc2d8;
    white-space: nowrap;
}

.tab.active {
    padding: 0 18px 1px;
    border: 1px solid #bcc2d8;
    border-bottom-color: transparent;
    border-radius: 8px 4px 0 0;
}

.tabs::after {
    content: "";
    order: 1;
    flex: 1;
    border-bottom: 1px solid #bcc2d8;
}

.cog {
    width: 16px;
    height: 16px;
    stroke: #999;
    position: absolute;
    right: 1px;
    top: 5px;
}

.toolbar {
    display: flex;
    height: 36px;
    padding: 1px 0 0 3px;
    border-left: 1px solid #cdd1e0;
}

.tool {
    width: 28px;
    height: 28px;
    flex: none;
    display: grid;
    place-items: center;
    position: relative;
}

.tool svg {
    width: 24px;
    height: 24px;
}

.more::after {
    content: "";
    position: absolute;
    right: 0;
    bottom: 0;
    border: 3px solid #666;
    border-top-color: transparent;
    border-left-color: transparent;
}

.pt {
    fill: #fff;
    stroke: #111;
}

.q {
    font: bold 18px "Liberation Serif", serif;
    fill: #fff;
}

/* main area */
.workspace {
    flex: 1;
    min-height: 0;
    display: grid;
    grid-template-columns: 64px minmax(0, 1fr) 527px;
}

.sidebar {
    display: grid;
    grid-template-columns: 28px 28px;
    grid-auto-rows: 28px;
    align-content: start;
    margin: 5px 6px 0 0;
    padding-top: 1px;
    border-top: 3px double #cdd1e0;
}

.stage {
    display: flex;
    flex-direction: column;
    padding-top: 2px;
}

.views {
    flex: 1;
    min-height: 0;
    display: grid;
    grid-template: 1fr 1fr / 1fr 1fr;
    gap: 2px;
    position: relative;
}

.view {
    position: relative;
    overflow: hidden;
    min-height: 0;
    background-color: #9da3ab;
    border: 1px solid #bcc2d8;
}

.view > svg {
    position: absolute;
    inset: 0;
    width: 100%;
    height: 100%;
    fill: none;
}

.minor {
    stroke: #929aa2;
}

.major {
    stroke: #80868f;
}

.axis-r {
    stroke: #9b4343;
    stroke-width: 2;
}

.axis-g {
    stroke: #469646;
    stroke-width: 2;
}

.tripod {
    stroke: #5f6367;
}

.view text {
    fill: #666a6e;
    font: 14px "Noto Sans", sans-serif;
}

.view-tag {
    position: relative;
    z-index: 1;
    display: flex;
    align-items: center;
    height: 20px;
    padding: 0 4px 0 7px;
    background-color: #c8ccd3;
    border-radius: 0 0 4px 0;
    color: #585c61;
    font-weight: bold;
}

.view-tag i {
    display: flex;
    align-items: center;
    height: 17px;
    margin-left: 7px;
    padding-left: 1px;
    border-left: 1px solid #555;
}

.view-tag i::after {
    content: "";
    border: 4px solid transparent;
    border-top: 5px solid #555;
    border-bottom: 0;
}

.view-tag.current {
    background-color: #869fee;
    color: #222;
}

.view-tag.current i::after {
    border-top-color: #222;
}

.float {
    position: absolute;
    left: 477px;
    top: 214px;
    width: 645px;
    height: 386px;
    display: flex;
    flex-direction: column;
    z-index: 2;
    box-shadow: 1px 3px 10px rgba(0, 0, 0, .5);
}

.float header {
    display: flex;
    align-items: center;
    justify-content: space-between;
    height: 30px;
    padding: 0 1px 0 8px;
    background-color: #fff;
    color: #888;
    font-size: 12px;
}

.float header button {
    width: 19px;
    height: 19px;
    background-color: #e3e3e3;
    color: #fff;
    font-weight: bold;
    line-height: 16px;
}

.float .view {
    flex: 1;
    border: 0;
}

.view-tabs {
    display: flex;
    gap: 17px;
    height: 31px;
    padding-left: 12px;
    line-height: 26px;
}

.view-tabs button {
    height: 26px;
}

.view-tabs svg {
    width: 12px;
    height: 12px;
}

/* properties panel */
.panel {
    display: flex;
    flex-direction: column;
    padding: 4px 2px 11px 9px;
}

.panel h1 {
    display: flex;
    align-items: center;
    gap: 5px;
    height: 23px;
    padding: 0 0 1px 2px;
    font-size: 13px;
    font-weight: normal;
}

.panel h1::after {
    content: "";
    flex: 1;
    height: 3px;
    border: 1px solid #cdd1e0;
    border-width: 1px 0;
}

.panel-tabs {
    display: flex;
    height: 29px;
    position: relative;
}

.panel-tabs button {
    width: 44px;
    display: grid;
    place-items: center;
    padding: 2px 0 0 4px;
}

.panel-tabs .active {
    border: 1px solid #bcc2d8;
    border-bottom: 0;
}

.panel-tabs button svg {
    width: 16px;
    height: 16px;
}

.panel-tabs::after {
    content: "";
    position: absolute;
    left: 44px;
    right: 0;
    bottom: 0;
    border-bottom: 1px solid #bcc2d8;
}

.panel-tabs .cog {
    top: 12px;
    stroke: #c3c8d8;
}

.panel-body {
    flex: 1;
    border: 1px solid #bcc2d8;
    border-top: 0;
    padding: 4px 7px 0 6px;
}

.pages {
    display: flex;
    gap: 4px;
    margin-bottom: 9px;
}

.pages button {
    width: 28px;
    height: 28px;
    display: grid;
    place-items: center;
}

.pages .active {
    background-color: #aebdec;
}

.pages svg {
    width: 24px;
    height: 24px;
}

.panel table {
    width: 100%;
    table-layout: fixed;
    border-collapse: collapse;
}

.panel caption {
    height: 30px;
    padding-left: 2px;
    border-bottom: 1px solid #dde1ea;
    text-align: left;
    font-size: 15px;
    line-height: 30px;
}

.panel th {
    width: 249px;
    height: 25px;
    padding-left: 21px;
    text-align: left;
    font-weight: normal;
    background: linear-gradient(#dde1ea, #dde1ea) 17px 100% / 100% 1px no-repeat;
    border-right: 1px solid #dde1ea;
}

.panel td {
    height: 25px;
    border-bottom: 1px solid #dde1ea;
}

.panel td.field {
    background-color: #fff;
}

.panel td input[type="text"] {
    display: block;
    width: 100%;
    height: 24px;
    padding-left: 4px;
}

.combo {
    position: relative;
}

.combo select {
    display: block;
    width: 100%;
    height: 24px;
    padding-left: 3px;
    appearance: none;
}

.combo span {
    position: absolute;
    top: 1px;
    right: 1px;
    width: 23px;
    height: 23px;
    display: grid;
    place-items: center;
    background-color: #e1e1e1;
    border: 1px solid #adadad;
    pointer-events: none;
}

.combo svg {
    width: 12px;
    height: 12px;
    fill: none;
    stroke: #444;
}

.place {
    display: block;
    width: calc(100% - 2px);
    height: 23px;
    margin-left: 1px;
    background-color: #e1e1e1;
    border: 1px solid #adadad;
    color: #000;
}

.panel .file {
    display: flex;
    padding-right: 1px;
}

.panel .file input[type="text"] {
    padding-left: 3px;
}

.file button {
    width: 23px;
    height: 23px;
    flex: none;
    background-color: #e1e1e1;
    border: 1px solid #adadad;
}

input[type="checkbox"] {
    appearance: none;
    display: block;
    flex: none;
    width: 13px;
    height: 13px;
    background-color: #fff;
    border: 1px solid #333;
}

input[type="checkbox"]:checked {
    background-image: url("data:image/svg+xml,%3Csvg xmlns='http://www.w3.org/2000/svg' viewBox='0 0 11 11'%3E%3Cpath d='m1.500 5.500 3 3 5-6' fill='none' stroke='%23222' stroke-width='1.300'/%3E%3C/svg%3E");
}

input[type="checkbox"]:disabled {
    background-color: #e4e4e4;
    border-color: #b5b5b5;
}

.panel input[type="checkbox"] {
    margin-left: 2px;
}

/* osnap row */
.osnap {
    display: flex;
    gap: 7px;
    height: 20px;
    margin-left: 3px;
    padding-left: 3px;
    border-left: 3px double #cdd1e0;
}

.osnap label {
    display: flex;
    align-items: center;
    gap: 3px;
    padding-top: 2px;
}

.osnap .last {
    margin-left: 13px;
}

/* status bar */
.status {
    display: flex;
    height: 20px;
    margin-right: 6px;
    border-top: 1px solid #bcc2d8;
    line-height: 22px;
    white-space: nowrap;
}

.status > * {
    padding: 0 5px 0 4px;
    border-right: 1px solid #bcc2d8;
}

.coord {
    width: 88px;
    text-align: center;
}

.status .layer {
    width: 168px;
    display: flex;
    gap: 2px;
    padding-left: 3px;
}

.layer i {
    width: 14px;
    height: 14px;
    margin-top: 2px;
    background-color: #000;
}

.status .on {
    background-color: #d2d9ef;
    font-weight: bold;
}

.status .cpu {
    flex: 1;
    padding: 0 1px;
}

/* windows taskbar */
.taskbar {
    position: relative;
    display: flex;
    height: 40px;
    padding-left: 1px;
    background-color: #262423;
    color: #fff;
}

.taskbar > button {
    width: 49px;
    display: grid;
    place-items: center;
    position: relative;
}

.taskbar > button svg {
    width: 24px;
    height: 24px;
}

.run::after {
    content: "";
    position: absolute;
    left: 5px;
    right: 4px;
    bottom: 0;
    height: 2px;
    background-color: #fbb9ab;
}

.multi::after {
    background: linear-gradient(90deg, #fbb9ab 31px, #a87e76 31px);
}

.taskbar .focus {
    background-color: #55555a;
}

.focus::after {
    left: 0;
    right: 0;
}

.seven {
    font: 10px "Open Sans", sans-serif;
    fill: #fff;
}

.tray {
    display: flex;
    align-items: center;
    gap: 8px;
    margin-left: auto;
    padding-right: 26px;
    font-size: 12px;
}

.tray svg {
    width: 16px;
    height: 16px;
}

.tray .line {
    fill: none;
    stroke: #fff;
    stroke-width: 2;
}

.ime {
    padding: 0 5px;
    font-size: 15px;
}

.pin {
    background-color: #fff;
    color: #222;
    font-size: 13px;
    line-height: 15px;
    font-weight: bold;
}

.tray time {
    width: 76px;
    text-align: center;
    line-height: 19px;
}

.mark {
    position: absolute;
    right: 16px;
    top: 6px;
    color: rgba(220, 220, 220, .65);
    font-size: 20px;
    line-height: 28px;
}
```
FILE: views.js
```js
// Draws the construction plane grid inside every .view element
const EXTENT = 70;
const UNIT = 12.8;

// Camera at (43.307, -75.009, 50.006) looking at the origin, 50mm lens
function perspective(w, h) {
    const f = h / 2 * 50 / 12;
    return (x, y) => {
        const d = 100 - 0.433 * x + 0.75 * y;
        const px = w / 2 + f * (0.866 * x + 0.5 * y) / d;
        const py = h / 2 - f * (0.433 * y - 0.25 * x) / d;
        return px.toFixed(1) + " " + py.toFixed(1);
    };
}

function ortho(w, h) {
    return (x, y) => (Math.floor(w / 2 + x * UNIT) + 0.5) + " " + (Math.floor(h / 2 - y * UNIT) + 0.5);
}

function tripod(view, h) {
    const y = h - 36;
    if (view.dataset.view === "persp") {
        return `<path class="tripod" d="M36.5 ${y - 27}V${y}L62 ${y + 8}M36 ${y}L51 ${y - 13}"/>
            <text x="38" y="${y - 26}">z</text><text x="53" y="${y - 12}">y</text><text x="65" y="${y + 8}">x</text>`;
    }
    const [a, b] = view.dataset.axes.split(" ");
    return `<path class="tripod" d="M36.5 ${y - 30}V${y + 0.5}H66"/>
        <text x="39" y="${y - 30}">${b}</text><text x="69" y="${y + 1}">${a}</text>`;
}

function draw(view) {
    const w = view.clientWidth;
    const h = view.clientHeight;
    const p = view.dataset.view === "persp" ? perspective(w, h) : ortho(w, h);
    let minor = "";
    let major = "";
    for (let i = -EXTENT; i <= EXTENT; i++) {
        const d = `M${p(i, -EXTENT)}L${p(i, EXTENT)}M${p(-EXTENT, i)}L${p(EXTENT, i)}`;
        if (i % 5 === 0) major += d;
        else minor += d;
    }
    const old = view.querySelector(":scope > svg");
    if (old) old.remove();
    view.insertAdjacentHTML("afterbegin", `<svg>
        <path class="minor" d="${minor}"/><path class="major" d="${major}"/>
        <path class="axis-g" d="M${p(0, 0)}L${p(0, EXTENT)}"/><path class="axis-r" d="M${p(0, 0)}L${p(EXTENT, 0)}"/>
        ${tripod(view, h)}</svg>`);
}

function drawAll() {
    document.querySelectorAll(".view").forEach(draw);
}

drawAll();
window.addEventListener("resize", drawAll);
```
